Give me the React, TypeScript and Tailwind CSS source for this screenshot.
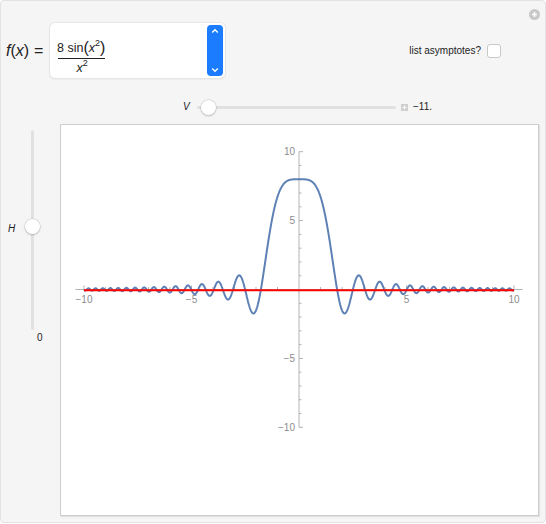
import React from "react";

const X0 = 238;
const SX = 21.5;
const Y0 = 164.5;
const SY = 13.78;

function buildCurve() {
  const parts: string[] = [];
  for (let i = 0; i <= 4000; i++) {
    const x = -10 + i * 0.005;
    const y = Math.abs(x) < 1e-9 ? 8 : (8 * Math.sin(x * x)) / (x * x);
    const px = X0 + x * SX;
    const py = Y0 - y * SY;
    parts.push(`${i === 0 ? "M" : "L"}${px.toFixed(2)},${py.toFixed(2)}`);
  }
  return parts.join(" ");
}

function Plot() {
  const curve = buildCurve();
  const ticks: React.ReactNode[] = [];
  for (let k = -10; k <= 10; k++) {
    if (k === 0) continue;
    const major = k % 5 === 0;
    const len = major ? 4 : 2.5;
    const yy = Y0 - k * SY;
    ticks.push(
      <line key={"y" + k} x1={X0} x2={X0 + len} y1={yy} y2={yy} stroke="#b3b3b3" strokeWidth={1} />
    );
    const xx = X0 + k * SX;
    ticks.push(
      <line key={"x" + k} x1={xx} x2={xx} y1={Y0} y2={Y0 - len} stroke="#b3b3b3" strokeWidth={1} />
    );
  }
  const yLabels = [10, 5, -5, -10];
  const xLabels = [-10, -5, 5, 10];
  const fmt = (n: number) => (n < 0 ? "\u2212" + Math.abs(n) : String(n));
  return (
    <svg width={477} height={390} className="block">
      <line x1={X0 - 10.4 * SX} x2={X0 + 10.4 * SX} y1={Y0} y2={Y0} stroke="#b3b3b3" strokeWidth={1} />
      <line x1={X0} x2={X0} y1={Y0 - 10 * SY} y2={Y0 + 10 * SY} stroke="#b3b3b3" strokeWidth={1} />
      {ticks}
      {yLabels.map((v) => (
        <text
          key={"yl" + v}
          x={X0 - 4}
          y={Y0 - v * SY + 3.5}
          textAnchor="end"
          fontSize={10}
          fill="#8c8c8c"
          fontFamily="'Liberation Sans', Arial, sans-serif"
        >
          {fmt(v)}
        </text>
      ))}
      {xLabels.map((v) => (
        <text
          key={"xl" + v}
          x={X0 + v * SX}
          y={Y0 + 13}
          textAnchor="middle"
          fontSize={10}
          fill="#8c8c8c"
          fontFamily="'Liberation Sans', Arial, sans-serif"
        >
          {fmt(v)}
        </text>
      ))}
      <path d={curve} fill="none" stroke="#5e81b5" strokeWidth={2} strokeLinejoin="round" />
      <line x1={X0 - 10 * SX} x2={X0 + 10 * SX} y1={Y0 + 0.8} y2={Y0 + 0.8} stroke="#ff0000" strokeWidth={2} />
    </svg>
  );
}

export default function App() {
  return (
    <div className="relative w-[546px] h-[523px] bg-[#f5f5f5] border border-[#e2e2e2] rounded-[4px] box-border font-['Liberation_Sans',Arial,sans-serif] text-[#222]">
      {/* corner icon */}
      <div className="absolute left-[528px] top-[8px] w-[11px] h-[11px] rounded-full bg-[#c8c8c8] flex items-center justify-center">
        <svg width="7" height="7" viewBox="0 0 7 7">
          <path d="M3.5 1v5M1 3.5h5" stroke="#fff" strokeWidth="1.5" />
        </svg>
      </div>

      {/* Row 1 */}
      <div className="flex items-center h-[55px] mt-[22px] pl-[5px]">
        <div className="w-[44px] text-[16px] leading-none flex items-center">
          <span className="italic">f</span>
          <span>(</span>
          <span className="italic">x</span>
          <span>)</span>
          <span className="ml-[5px]">=</span>
        </div>
        <div className="w-[175px] h-[55px] bg-white rounded-[5px] shadow-[0_0_0_1px_#e6e6e6,0_1px_2px_rgba(0,0,0,0.12)] flex">
          <div className="flex-1 pl-[7px] pt-[12px]">
            <div className="inline-flex flex-col items-center">
              <div className="flex items-center text-[12.5px] leading-none h-[16px]">
                <span>8 sin</span>
                <span className="text-[16px] leading-none font-light">(</span>
                <span className="italic">x</span>
                <span className="text-[9px] self-start -mt-[1px]">2</span>
                <span className="text-[16px] leading-none font-light">)</span>
              </div>
              <div className="w-[47px] h-[1px] bg-[#222] mt-[2px]" />
              <div className="flex text-[12.5px] leading-none mt-[3px] ml-[2px]">
                <span className="italic">x</span>
                <span className="text-[9px] -mt-[3px]">2</span>
              </div>
            </div>
          </div>
          <div className="w-[16px] h-[51px] mt-[2px] mr-[2px] rounded-[4px] bg-[#1b7cff] flex flex-col items-center justify-between py-[3px]">
            <svg width="8" height="6" viewBox="0 0 8 6">
              <path d="M1.2 4.5L4 1.7l2.8 2.8" stroke="#fff" strokeWidth="1.4" fill="none" />
            </svg>
            <svg width="8" height="6" viewBox="0 0 8 6">
              <path d="M1.2 1.5L4 4.3l2.8-2.8" stroke="#fff" strokeWidth="1.4" fill="none" />
            </svg>
          </div>
        </div>
        <div className="flex-1" />
        <div className="flex items-center mr-[44px]">
          <span className="text-[10px] leading-none">list asymptotes?</span>
          <div className="ml-[6px] w-[14px] h-[14px] rounded-[3px] bg-white border border-[#c9c9c9]" />
        </div>
      </div>

      {/* Row 2: V slider */}
      <div className="flex items-center h-[16px] mt-[21px]">
        <span className="ml-[182px] w-[14px] text-[10px] italic leading-none">V</span>
        <div className="relative w-[199px] h-[3px] rounded-full bg-[#e1e1e1]">
          <div className="absolute left-[4px] -top-[6px] w-[15px] h-[15px] rounded-full bg-white shadow-[0_0_0_0.5px_#c8c8c8,0_1px_2px_rgba(0,0,0,0.25)]" />
        </div>
        <div className="ml-[5px] w-[7px] h-[7px] bg-[#cfcfcf] flex items-center justify-center">
          <svg width="5" height="5" viewBox="0 0 5 5">
            <path d="M2.5 0.5v4M0.5 2.5h4" stroke="#fff" strokeWidth="1" />
          </svg>
        </div>
        <span className="ml-[5px] text-[10px] leading-none">{"\u221211."}</span>
      </div>

      {/* Row 3 */}
      <div className="flex mt-[9px]">
        <div className="w-[59px] relative">
          <div className="relative ml-[30px] mt-[6px] w-[3px] h-[200px] rounded-full bg-[#e1e1e1]">
            <div className="absolute -left-[6px] top-[89px] w-[15px] h-[15px] rounded-full bg-white shadow-[0_0_0_0.5px_#c8c8c8,0_1px_2px_rgba(0,0,0,0.25)]" />
            <span className="absolute -left-[23px] top-[94px] text-[10px] italic leading-none">H</span>
          </div>
          <div className="ml-[36px] mt-[3px] text-[10px] leading-none">0</div>
        </div>
        <div className="w-[479px] h-[392px] bg-white border border-[#cdcdcd] shadow-[1px_1px_1px_rgba(0,0,0,0.08)]">
          <Plot />
        </div>
      </div>
    </div>
  );
}
